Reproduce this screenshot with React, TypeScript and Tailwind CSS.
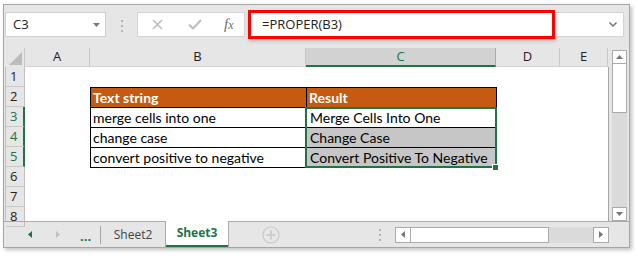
import React from 'react';

const ui = { fontFamily: '"Open Sans", "Noto Sans", sans-serif' };
const cell = { fontFamily: 'Lato, "Open Sans", sans-serif' };

const rows = [
  { b: 'merge cells into one', c: 'Merge Cells Into One' },
  { b: 'change case', c: 'Change Case' },
  { b: 'convert positive to negative', c: 'Convert Positive To Negative' },
];

function Tri({ dir, color, w = 7, h = 4 }: { dir: 'up' | 'down' | 'left' | 'right'; color: string; w?: number; h?: number }) {
  const pts =
    dir === 'down'
      ? `0,0 ${w},0 ${w / 2},${h}`
      : dir === 'up'
      ? `0,${h} ${w},${h} ${w / 2},0`
      : dir === 'left'
      ? `${w},0 ${w},${h} 0,${h / 2}`
      : `0,0 0,${h} ${w},${h / 2}`;
  return (
    <svg width={w} height={h} viewBox={`0 0 ${w} ${h}`}>
      <polygon points={pts} fill={color} />
    </svg>
  );
}

function Dots() {
  return (
    <div className="flex flex-col gap-[3px]">
      <div className="w-[2px] h-[2px] bg-[#b4b4b4]" />
      <div className="w-[2px] h-[2px] bg-[#b4b4b4]" />
      <div className="w-[2px] h-[2px] bg-[#b4b4b4]" />
    </div>
  );
}

export default function App() {
  const cols = [
    { l: 'A', w: 'w-[65px]' },
    { l: 'B', w: 'w-[216px]' },
    { l: 'C', w: 'w-[190px]', active: true },
    { l: 'D', w: 'w-[64px]' },
    { l: 'E', w: 'w-[48px]' },
  ];

  return (
    <div className="w-[638px] h-[256px] bg-white pt-[4px] pl-[3px]" style={ui}>
      <div className="w-[627px] h-[244px] border border-[#a6a6a6] bg-[#e6e6e6] flex flex-col shadow-[2px_2px_4px_rgba(0,0,0,0.25)]">
        {/* formula bar */}
        <div className="h-[43px] flex items-start pt-[7px] pl-[1px]">
          <div className="w-[101px] h-[25px] bg-white border border-[#d0d0d0] flex items-center justify-between pl-[7px] pr-[5px] text-[13px] text-[#222]">
            <span>C3</span>
            <Tri dir="down" color="#777" />
          </div>
          <div className="ml-[15px] mt-[8px]">
            <Dots />
          </div>
          <div className="ml-[14px] w-[108px] h-[25px] bg-white border border-[#d4d4d4] flex items-center">
            <svg className="ml-[14px]" width="11" height="11" viewBox="0 0 11 11">
              <path d="M1 1L10 10M10 1L1 10" stroke="#bdbdbd" strokeWidth="1.6" />
            </svg>
            <svg className="ml-[25px]" width="14" height="11" viewBox="0 0 14 11">
              <path d="M1 5.5L5 9.5L13 1" stroke="#bdbdbd" strokeWidth="2" fill="none" />
            </svg>
            <span className="ml-[22px] italic text-[15px] text-[#6e6e6e] leading-none" style={{ fontFamily: '"Liberation Serif", serif' }}>
              f<span className="text-[12px]">x</span>
            </span>
          </div>
          <div className="relative ml-[5px] w-[374px] h-[25px] bg-white border border-[#d4d4d4] flex items-center justify-between pl-[11px] pr-[6px]">
            <span className="text-[13px] text-[#222]">=PROPER(B3)</span>
            <svg width="8" height="5" viewBox="0 0 8 5">
              <path d="M0.5 0.5L4 4L7.5 0.5" stroke="#777" strokeWidth="1.5" fill="none" />
            </svg>
            <div className="absolute -left-[3px] -top-[3px] w-[307px] h-[29px] border-[3px] border-[#ff0000] shadow-[1px_2px_4px_rgba(0,0,0,0.2)]" />
          </div>
        </div>

        {/* grid */}
        <div className="h-[173px] flex pl-[1px]">
          <div className="w-[604px] flex flex-col">
            <div className="h-[19px] flex text-[13px] text-[#222]">
              <div className="w-[20px] border-r border-[#c8c8c8] flex items-end justify-end pr-[2px] pb-[2px]">
                <svg width="13" height="13" viewBox="0 0 13 13">
                  <polygon points="13,0 13,13 0,13" fill="#bcbcbc" />
                </svg>
              </div>
              {cols.map((c) => (
                <div
                  key={c.l}
                  className={`${c.w} flex items-center justify-center border-r ${
                    c.active ? 'bg-[#d2d2d2] text-[#217346] border-b-2 border-b-[#217346] border-r-[#ababab]' : 'border-[#c8c8c8] border-b border-b-[#d4d4d4]'
                  }`}
                >
                  {c.l}
                </div>
              ))}
            </div>
            <div className="h-[154px] flex">
              <div className="w-[20px] flex flex-col text-[13px] text-[#222] border-l border-[#c0c0c0]">
                {[1, 2, 3, 4, 5, 6, 7, 8].map((n) => {
                  const sel = n >= 3 && n <= 5;
                  return (
                    <div
                      key={n}
                      className={`h-[20px] shrink-0 border-b border-[#c8c8c8] pl-[4px] flex items-center leading-none ${
                        sel ? 'text-[#217346] border-r-2 border-r-[#217346]' : 'border-r border-r-[#c0c0c0]'
                      }`}
                    >
                      {n}
                    </div>
                  );
                })}
              </div>
              <div className="w-[584px] h-[154px] bg-white border-r border-[#a6a6a6] overflow-hidden pt-[20px] pl-[65px] text-[14px] text-black" style={cell}>
                <div className="w-[407px] flex flex-col">
                  <div className="h-[21px] flex bg-[#c55a11] text-white font-bold border border-black">
                    <div className="w-[216px] border-r border-black pl-[2px] flex items-center">Text string</div>
                    <div className="flex-1 pl-[2px] flex items-center">Result</div>
                  </div>
                  <div className="relative flex flex-col">
                    {rows.map((r, i) => (
                      <div key={r.b} className="h-[20px] flex border-x border-b border-black">
                        <div className="w-[216px] border-r border-black pl-[2px] flex items-center">{r.b}</div>
                        <div className={`flex-1 pl-[3px] flex items-center ${i > 0 ? 'bg-[#c6c6c6]' : ''}`}>{r.c}</div>
                      </div>
                    ))}
                    <div className="absolute left-[215px] -top-[1px] w-[192px] h-[61px] border-2 border-[#217346]" />
                    <div className="absolute left-[402px] top-[56px] w-[7px] h-[7px] bg-[#217346] border border-white" />
                  </div>
                </div>
              </div>
            </div>
          </div>
          <div className="ml-[3px] w-[15px] pt-[2px] flex flex-col">
            <div className="h-[14px] bg-white border border-[#ababab] flex items-center justify-center">
              <Tri dir="up" color="#777" />
            </div>
            <div className="h-[49px] bg-white border-x border-b border-[#ababab]" />
            <div className="flex-1 bg-[#dadada]" />
            <div className="h-[14px] bg-white border border-[#ababab] flex items-center justify-center">
              <Tri dir="down" color="#777" />
            </div>
          </div>
        </div>

        {/* sheet tabs */}
        <div className="h-[26px] flex">
          <div className="w-[161px] border-t border-[#ababab] flex items-center">
            <div className="ml-[24px]">
              <Tri dir="left" color="#217346" w={4} h={7} />
            </div>
            <div className="ml-[24px]">
              <Tri dir="right" color="#c0c0c0" w={4} h={7} />
            </div>
            <span className="ml-[20px] text-[13px] font-bold text-[#217346] leading-none pt-[4px]">...</span>
            <div className="ml-[9px] w-px h-[18px] bg-[#a6a6a6]" />
            <div className="flex-1 text-center text-[12px] text-[#444]">Sheet2</div>
          </div>
          <div className="w-[64px] bg-white border-x border-[#ababab] flex flex-col">
            <div className="flex-1 flex items-center justify-center text-[12px] font-bold text-[#217346]">Sheet3</div>
            <div className="h-[2px] bg-[#217346]" />
          </div>
          <div className="flex-1 border-t border-[#ababab] flex items-center">
            <svg className="ml-[33px]" width="18" height="18" viewBox="0 0 18 18">
              <circle cx="9" cy="9" r="8" fill="none" stroke="#c8c8c8" strokeWidth="1.2" />
              <path d="M9 4.5V13.5M4.5 9H13.5" stroke="#c8c8c8" strokeWidth="1.6" />
            </svg>
            <div className="ml-[99px]">
              <Dots />
            </div>
            <div className="ml-[14px] w-[214px] h-[16px] flex">
              <div className="w-[16px] bg-white border border-[#ababab] flex items-center justify-center">
                <Tri dir="left" color="#777" w={4} h={7} />
              </div>
              <div className="w-[138px] bg-white border-y border-r border-[#ababab]" />
              <div className="flex-1 bg-[#dadada]" />
              <div className="w-[16px] bg-white border border-[#ababab] flex items-center justify-center">
                <Tri dir="right" color="#777" w={4} h={7} />
              </div>
            </div>
          </div>
        </div>
      </div>
    </div>
  );
}
